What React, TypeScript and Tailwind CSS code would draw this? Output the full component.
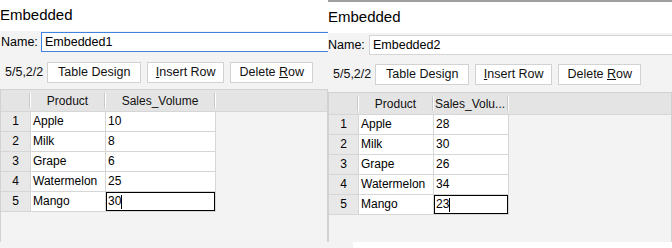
type Row = { product: string; sales: string };

const leftRows: Row[] = [
  { product: 'Apple', sales: '10' },
  { product: 'Milk', sales: '8' },
  { product: 'Grape', sales: '6' },
  { product: 'Watermelon', sales: '25' },
  { product: 'Mango', sales: '30' },
];

const rightRows: Row[] = [
  { product: 'Apple', sales: '28' },
  { product: 'Milk', sales: '30' },
  { product: 'Grape', sales: '26' },
  { product: 'Watermelon', sales: '34' },
  { product: 'Mango', sales: '23' },
];

function Toolbar() {
  return (
    <div className="flex h-[21px] items-center pl-[5px] text-[12.5px] text-[#111]">
      <span className="mr-[4px]">5/5,2/2</span>
      <button className="mr-[6px] h-[21px] w-[94px] border border-[#d2d2d2] bg-white">
        Table Design
      </button>
      <button className="mr-[6px] h-[21px] w-[77px] border border-[#d2d2d2] bg-white">
        <span className="underline">I</span>nsert Row
      </button>
      <button className="h-[21px] w-[83px] border border-[#d2d2d2] bg-white">
        Delete <span className="underline">R</span>ow
      </button>
    </div>
  );
}

function HeaderCell({
  label,
  width,
  align = 'text-center',
}: {
  label: string;
  width: string;
  align?: string;
}) {
  return (
    <div className={`flex h-full items-center ${width}`}>
      <span className={`flex-1 overflow-hidden whitespace-nowrap ${align}`}>{label}</span>
      <span className="h-[15px] w-[2px] border-l border-[#c8c8c8] bg-white" />
    </div>
  );
}

function Table({
  rows,
  salesLabel,
  salesWidth,
  salesAlign,
  height,
}: {
  rows: Row[];
  salesLabel: string;
  salesWidth: string;
  salesAlign?: string;
  height: string;
}) {
  return (
    <div className={`border-x border-t border-[#d2d2d2] text-[12px] text-black ${height}`}>
      <div className="flex h-[22px] border-b border-[#d6d6d6] bg-[#e4e4e4] text-[#111]">
        <HeaderCell label="" width="w-[30px]" />
        <HeaderCell label="Product" width="w-[75px]" />
        <HeaderCell label={salesLabel} width={salesWidth} align={salesAlign} />
      </div>
      {rows.map((row, i) => {
        const selected = i === rows.length - 1;
        return (
          <div key={row.product} className="flex h-[20px]">
            <div className="w-[30px] border-r border-b border-[#d6d6d6] bg-[#e8e8e8] text-center leading-[19px]">
              {i + 1}
            </div>
            <div className="w-[75px] border-r border-b border-[#d6d6d6] bg-white pl-[2px] leading-[19px] whitespace-nowrap">
              {row.product}
            </div>
            <div
              className={`flex items-center border-r border-b border-[#d6d6d6] bg-white pl-[2px] ${salesWidth} ${
                selected ? 'shadow-[inset_0_0_0_1px_#000]' : ''
              }`}
            >
              <span className="leading-[19px]">{row.sales}</span>
              {selected && <span className="h-[14px] w-px bg-black" />}
            </div>
          </div>
        );
      })}
    </div>
  );
}

export default function App() {
  return (
    <div className="flex h-[248px] w-[672px] overflow-hidden font-['Liberation_Sans',Arial,sans-serif] text-black">
      <div className="flex w-[328px] shrink-0 flex-col overflow-hidden bg-[#f3f3f4]">
        <div className="h-[31px] bg-white pt-[6px] text-[15px] leading-[17px]">Embedded</div>
        <div className="mt-[1px] flex h-[20px] items-center text-[12.5px]">
          <span className="w-[41px] pl-[1px]">Name:</span>
          <div className="h-[20px] flex-1 border border-r-0 border-[#3f82e0] bg-white pl-[3px] leading-[18px]">
            Embedded1
          </div>
        </div>
        <div className="mt-[10px]">
          <Toolbar />
        </div>
        <div className="mt-[6px]">
          <Table rows={leftRows} salesLabel="Sales_Volume" salesWidth="w-[110px]" height="h-[153px]" />
        </div>
      </div>

      <div className="flex min-w-0 flex-1 flex-col bg-[#f3f3f4]">
        <div className="h-[2px] bg-[#a0a0a0]" />
        <div className="h-[31px] bg-white pt-[6px] text-[15px] leading-[17px]">Embedded</div>
        <div className="mt-[2px] flex h-[20px] items-center text-[12.5px]">
          <span className="w-[41px]">Name:</span>
          <div className="h-[20px] flex-1 border border-r-0 border-[#d4d4d4] bg-white pl-[3px] leading-[18px]">
            Embedded2
          </div>
        </div>
        <div className="mt-[9px]">
          <Toolbar />
        </div>
        <div className="mt-[7px]">
          <Table
            rows={rightRows}
            salesLabel="Sales_Volu..."
            salesWidth="w-[75px]"
            salesAlign="text-left pl-[1px]"
            height="h-[150px]"
          />
        </div>
        <div className="flex h-[6px]">
          <div className="w-[25px] bg-[#f3f3f4]" />
          <div className="flex-1 bg-white" />
        </div>
      </div>
    </div>
  );
}
